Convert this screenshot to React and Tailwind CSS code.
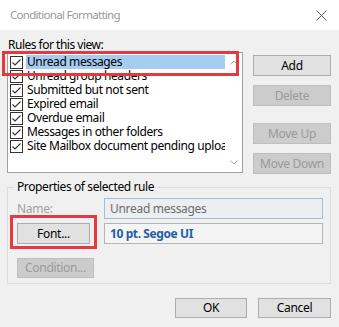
import React from 'react'

const rules = [
  'Unread messages',
  'Unread group headers',
  'Submitted but not sent',
  'Expired email',
  'Overdue email',
  'Messages in other folders',
  'Site Mailbox document pending upload',
]

function CheckBox() {
  return (
    <svg width="13" height="13" viewBox="0 0 13 13" className="shrink-0">
      <rect x="0.5" y="0.5" width="12" height="12" fill="#fff" stroke="#333" />
      <path d="M2.5 6.5 L5 9 L10.5 3.5" fill="none" stroke="#333" strokeWidth="1.1" />
    </svg>
  )
}

function Btn({ children, disabled, className = '' }) {
  return (
    <div
      className={
        'flex items-center justify-center border text-[12px] tracking-[-0.3px] ' +
        (disabled
          ? 'bg-[#cccccc] border-[#bfbfbf] text-[#9a9a9a] '
          : 'bg-[#e1e1e1] border-[#adadad] text-black ') +
        className
      }
    >
      {children}
    </div>
  )
}

export default function App() {
  return (
    <div
      className="relative w-[339px] h-[327px] overflow-hidden bg-[#f0f0f0] text-black"
      style={{ fontFamily: '"Noto Sans", "Open Sans", sans-serif' }}
    >
      {/* Title bar */}
      <div className="h-[30px] bg-white flex items-center justify-between pl-[10px] pr-[12px]">
        <span className="text-[11.5px] tracking-[-0.7px] text-[#9a9a9a]">Conditional Formatting</span>
        <svg width="11" height="11" viewBox="0 0 11 11">
          <path d="M0.5 0.5 L10.5 10.5 M10.5 0.5 L0.5 10.5" stroke="#555" strokeWidth="1" />
        </svg>
      </div>

      <div className="px-[7px]">
        <div className="mt-[8px] h-[14px] leading-[14px] text-[12px] tracking-[-0.5px] pl-[1px]">Rules for this view:</div>

        <div className="flex gap-[10px]">
          {/* Rules list */}
          <div className="relative w-[236px] h-[121px] border border-[#a0a0a0] bg-white flex">
            <div className="flex-1 pt-[2px] overflow-hidden">
              {rules.map((r, i) => (
                <div key={r} className="flex items-center h-[14px] pl-[2px]">
                  <CheckBox />
                  <div
                    className={
                      'ml-[3px] flex-1 h-[14px] leading-[14px] text-[12px] tracking-[-0.4px] pl-[1px] whitespace-nowrap ' +
                      (i === 0 ? 'bg-[#a6cdf0]' : '')
                    }
                  >
                    {r}
                  </div>
                </div>
              ))}
            </div>
            <div className="w-[17px] flex flex-col items-center justify-between py-[7px]">
              <svg width="8" height="5" viewBox="0 0 8 5">
                <path d="M0.5 4.5 L4 1 L7.5 4.5" fill="none" stroke="#b0b0b0" />
              </svg>
              <svg width="8" height="5" viewBox="0 0 8 5">
                <path d="M0.5 0.5 L4 4 L7.5 0.5" fill="none" stroke="#b0b0b0" />
              </svg>
            </div>
          </div>

          {/* Side buttons */}
          <div className="w-[78px] pt-[3px] flex flex-col">
            <Btn className="h-[21px]">Add</Btn>
            <Btn disabled className="h-[21px] mt-[9px]">Delete</Btn>
            <Btn disabled className="h-[21px] mt-[17px]">Move Up</Btn>
            <Btn disabled className="h-[21px] mt-[9px]">Move Down</Btn>
          </div>
        </div>

        {/* Properties group */}
        <fieldset className="mt-[6px] w-[324px] border border-[#dcdcdc] pb-[5px]">
          <legend className="ml-[6px] px-[3px] text-[12px] tracking-[-0.4px] leading-[14px]">Properties of selected rule</legend>
          <div className="mt-[4px] flex items-center pl-[9px]">
            <span className="w-[87px] text-[12px] tracking-[-0.3px] text-[#a0a0a0]">Name:</span>
            <div className="w-[219px] h-[21px] border border-[#a6bcd2] bg-[#eceef1] flex items-center px-[5px] text-[12px] tracking-[-0.3px] text-[#6d6d6d]">
              Unread messages
            </div>
          </div>
          <div className="mt-[4px] flex items-center pl-[9px]">
            <Btn className="w-[73px] h-[21px]">Font...</Btn>
            <div className="ml-[14px] w-[219px] h-[21px] border border-[#b4b4b4] bg-[#f4f4f4] flex items-center px-[5px] text-[12px] tracking-[-0.4px] font-bold text-[#1e5fa8]">
              10 pt. Segoe UI
            </div>
          </div>
          <div className="mt-[14px] pl-[9px]">
            <Btn disabled className="w-[77px] h-[20px]">Condition...</Btn>
          </div>
        </fieldset>

        {/* Dialog buttons */}
        <div className="mt-[14px] flex justify-end gap-[11px] pr-[1px]">
          <Btn className="w-[72px] h-[20px]">OK</Btn>
          <Btn className="w-[73px] h-[20px]">Cancel</Btn>
        </div>
      </div>

      {/* Red annotation boxes */}
      <div className="absolute left-[2px] top-[51px] w-[237px] h-[25px] border-[3px] border-[#e5393f]" />
      <div className="absolute left-[10px] top-[215px] w-[87px] h-[34px] border-[3px] border-[#e5393f]" />
    </div>
  )
}
